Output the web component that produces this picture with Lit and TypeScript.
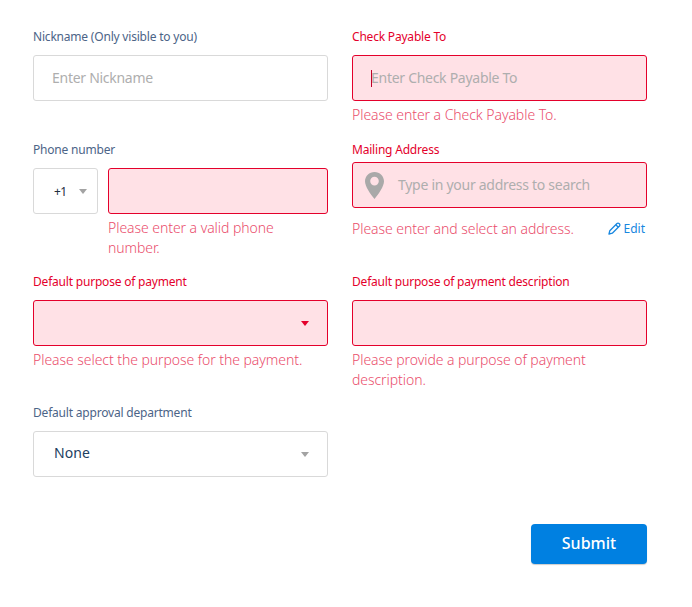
import { LitElement, html, css } from "lit";
import { customElement } from "lit/decorators.js";

const caret = () => html`<svg class="caret" width="8" height="5" viewBox="0 0 8 5"><path d="M0 0h8L4 5z" fill="currentColor"/></svg>`;

@customElement("app-root")
export class AppRoot extends LitElement {
  static styles = css`
    :host { display: block; width: 692px; height: 607px; box-sizing: border-box; padding: 27px 45px 0 33px; background: #fff; font-family: "Noto Sans", "Open Sans", sans-serif; overflow: hidden; }
    .grid { display: grid; grid-template-columns: 295px 295px; column-gap: 24px; align-items: start; }
    .r1 { height: 113px; } .r2 { height: 132px; } .r3 { height: 131px; }
    .label { font-size: 12px; line-height: 18px; padding-top: 1px; margin-bottom: 9px; color: #4c6487; letter-spacing: -0.2px; white-space: nowrap; }
    .label.err { color: #e4002b; }
    .label.tight { margin-bottom: 3px; }
    .box { position: relative; height: 46px; box-sizing: border-box; border: 1px solid #d9d9d9; border-radius: 3px; background: #fff; display: flex; align-items: center; font-size: 14px; }
    .box.err { border-color: #e4002b; background: #ffe1e6; }
    .ph { color: #aeaeae; letter-spacing: -0.28px; white-space: nowrap; margin-top: -2px; }
    .pad { padding-left: 18px; }
    .cursor { position: absolute; left: 18px; top: 14px; width: 1px; height: 17px; background: #c2002a; }
    .phone { display: flex; gap: 10px; }
    .code { width: 65px; flex: none; padding-left: 20px; font-size: 12px; color: #1f2f3f; letter-spacing: -0.5px; }
    .code .caret { margin-left: 12px; }
    .code-space { width: 65px; flex: none; }
    .grow { flex: 1; min-width: 0; }
    .caret { color: #a3a3a3; flex: none; }
    .sel { justify-content: space-between; padding: 0 18px 0 20px; color: #21405f; letter-spacing: 0.1px; }
    .sel.err { justify-content: flex-end; }
    .sel.err .caret { color: #e4002b; }
    .sel span { margin-top: -3px; }
    .msg { margin-top: 4px; font-size: 14px; line-height: 19.6px; font-weight: 300; color: #ea4d6c; letter-spacing: -0.06px; }
    .phone .msg { padding-right: 12px; }
    .msg-row { display: flex; justify-content: space-between; align-items: center; margin-top: 11px; }
    .msg-row .msg { margin-top: 0; }
    .edit { display: flex; align-items: center; gap: 3px; font-size: 12px; color: #1787e0; padding-right: 2px; }
    .addr { padding-left: 12px; }
    .addr svg { flex: none; margin-right: 14px; }
    .actions { display: flex; justify-content: flex-end; margin-top: 47px; }
    button { width: 116px; height: 40px; border: 0; border-radius: 4px; background: #0080e1; color: #fff; font: 500 16px "Noto Sans", sans-serif; box-shadow: 0 1px 1px rgba(0,0,0,.2); padding: 0 0 2px; }
  `;

  render() {
    return html`
      <div class="grid">
        <div class="r1">
          <div class="label">Nickname (Only visible to you)</div>
          <div class="box pad"><span class="ph">Enter Nickname</span></div>
        </div>
        <div class="r1">
          <div class="label err">Check Payable To</div>
          <div class="box err pad"><span class="ph">Enter Check Payable To</span><i class="cursor"></i></div>
          <div class="msg">Please enter a Check Payable To.</div>
        </div>
        <div class="r2">
          <div class="label">Phone number</div>
          <div class="phone">
            <div class="box code">+1 ${caret()}</div>
            <div class="box err grow"></div>
          </div>
          <div class="phone">
            <div class="code-space"></div>
            <div class="msg grow">Please enter a valid phone number.</div>
          </div>
        </div>
        <div class="r2">
          <div class="label err tight">Mailing Address</div>
          <div class="box err addr">
            <svg width="19" height="27" viewBox="0 0 19 27"><path fill="#a9a9a9" fill-rule="evenodd" d="M9.500 0C4.200 0 0 4.100 0 9.300c0 5.300 5.600 13 9.500 17.700 3.900-4.700 9.500-12.400 9.500-17.700C19 4.100 14.800 0 9.500 0zm0 4.800a4.300 4.300 0 1 1 0 8.600 4.300 4.300 0 0 1 0-8.600z"/></svg>
            <span class="ph">Type in your address to search</span>
          </div>
          <div class="msg-row">
            <div class="msg">Please enter and select an address.</div>
            <div class="edit">
              <svg width="13" height="13" viewBox="0 0 13 13"><path fill="none" stroke="currentColor" stroke-width="1.300" stroke-linejoin="round" d="M1 12l.8-3.300L9 1.500a1.400 1.400 0 0 1 2 0l.5.5a1.400 1.400 0 0 1 0 2L4.300 11.200 1 12zM7.800 2.700l2.500 2.500"/></svg>
              <span>Edit</span>
            </div>
          </div>
        </div>
        <div class="r3">
          <div class="label err">Default purpose of payment</div>
          <div class="box err sel">${caret()}</div>
          <div class="msg">Please select the purpose for the payment.</div>
        </div>
        <div class="r3">
          <div class="label err">Default purpose of payment description</div>
          <div class="box err"></div>
          <div class="msg">Please provide a purpose of payment description.</div>
        </div>
        <div>
          <div class="label">Default approval department</div>
          <div class="box sel"><span>None</span>${caret()}</div>
        </div>
      </div>
      <div class="actions"><button>Submit</button></div>
    `;
  }
}
